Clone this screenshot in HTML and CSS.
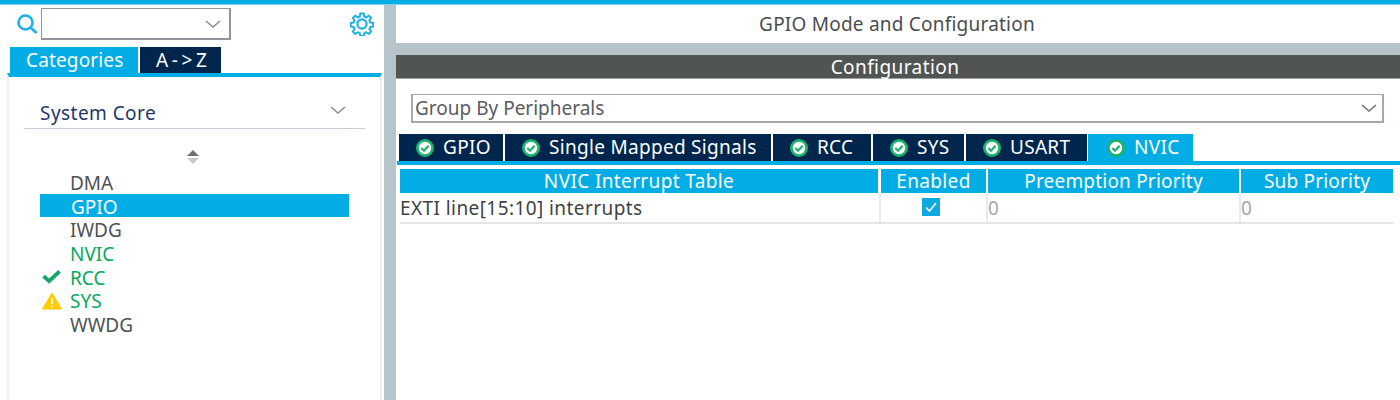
FILE: index.html
```html
<!DOCTYPE html>
<html lang="en">
<head>
<meta charset="utf-8">
<title>GPIO Mode and Configuration</title>
<link rel="stylesheet" href="styles.css">
</head>
<body>
<div class="topline"></div>
<div class="app">
  <aside class="left">
    <div class="search">
      <svg class="mag" viewBox="0 0 22 22" width="22" height="22"><circle cx="9.5" cy="9.5" r="7" fill="none" stroke="#1fb1e6" stroke-width="2.6"/><path d="M14.5 14.5L20.5 20" stroke="#1fb1e6" stroke-width="2.6" fill="none"/></svg>
      <div class="combo"><svg class="chev" viewBox="0 0 16 8" width="16" height="8"><path d="M1 1l7 6 7-6" fill="none" stroke="#8a8f92" stroke-width="1.6"/></svg></div>
      <svg class="gear" viewBox="0 0 24 24" width="24" height="24"><circle cx="12" cy="12" r="4.6" fill="none" stroke="#1fb1e6" stroke-width="2.2"/><path d="M10.3 1.5h3.4l.5 3 2.1.9 2.5-1.8 2.4 2.4-1.8 2.5.9 2.1 3 .5v3.4l-3 .5-.9 2.1 1.8 2.5-2.4 2.4-2.5-1.8-2.1.9-.5 3h-3.4l-.5-3-2.1-.9-2.5 1.8-2.4-2.4 1.8-2.5-.9-2.1-3-.5v-3.4l3-.5.9-2.1-1.8-2.5 2.4-2.4 2.5 1.8 2.1-.9z" fill="none" stroke="#1fb1e6" stroke-width="2" stroke-linejoin="round"/></svg>
    </div>
    <div class="lefttabs">
      <div class="ltab on">Categories</div>
      <div class="ltab az">A-&gt;Z</div>
    </div>
    <div class="tree">
      <div class="section"><span>System Core</span><svg viewBox="0 0 16 8" width="16" height="8"><path d="M1 1l7 6 7-6" fill="none" stroke="#8a8f92" stroke-width="1.6"/></svg></div>
      <div class="sorter"><i class="up"></i><i class="down"></i></div>
      <ul class="items">
        <li>DMA</li>
        <li class="sel">GPIO</li>
        <li>IWDG</li>
        <li class="ok">NVIC</li>
        <li class="ok"><svg class="mark" viewBox="0 0 20 16" width="19" height="15"><path d="M1.5 7.5l6 5.5L18.5 2.5" fill="none" stroke="#12a868" stroke-width="4"/></svg>RCC</li>
        <li class="ok"><svg class="mark" viewBox="0 0 20 18" width="20" height="18"><path d="M10 1L19.5 17H.5z" fill="#ffcc00" stroke="#ffcc00" stroke-linejoin="round"/><path d="M10 6v6M10 13.5v2" stroke="#fff" stroke-width="1.6"/></svg>SYS</li>
        <li>WWDG</li>
      </ul>
    </div>
  </aside>
  <div class="split"></div>
  <main class="right">
    <h1 class="title">GPIO Mode and Configuration</h1>
    <div class="gap"></div>
    <div class="confbar">Configuration</div>
    <div class="body">
      <div class="group">Group By Peripherals<svg viewBox="0 0 16 8" width="16" height="8"><path d="M1 1l7 6 7-6" fill="none" stroke="#6f7477" stroke-width="1.6"/></svg></div>
      <div class="tabs">
        <div class="tab t1"><svg class="tick" viewBox="0 0 18 18" width="18" height="18"><circle cx="9" cy="9" r="7.6" fill="#fff" stroke="#1bb36b" stroke-width="2.8"/><path d="M5.3 9l2.7 2.7 4.6-4.9" fill="none" stroke="#1bb36b" stroke-width="2.2"/></svg>GPIO</div>
        <div class="tab t2"><svg class="tick" viewBox="0 0 18 18" width="18" height="18"><circle cx="9" cy="9" r="7.6" fill="#fff" stroke="#1bb36b" stroke-width="2.8"/><path d="M5.3 9l2.7 2.7 4.6-4.9" fill="none" stroke="#1bb36b" stroke-width="2.2"/></svg>Single Mapped Signals</div>
        <div class="tab t3"><svg class="tick" viewBox="0 0 18 18" width="18" height="18"><circle cx="9" cy="9" r="7.6" fill="#fff" stroke="#1bb36b" stroke-width="2.8"/><path d="M5.3 9l2.7 2.7 4.6-4.9" fill="none" stroke="#1bb36b" stroke-width="2.2"/></svg>RCC</div>
        <div class="tab t4"><svg class="tick" viewBox="0 0 18 18" width="18" height="18"><circle cx="9" cy="9" r="7.6" fill="#fff" stroke="#1bb36b" stroke-width="2.8"/><path d="M5.3 9l2.7 2.7 4.6-4.9" fill="none" stroke="#1bb36b" stroke-width="2.2"/></svg>SYS</div>
        <div class="tab t5"><svg class="tick" viewBox="0 0 18 18" width="18" height="18"><circle cx="9" cy="9" r="7.6" fill="#fff" stroke="#1bb36b" stroke-width="2.8"/><path d="M5.3 9l2.7 2.7 4.6-4.9" fill="none" stroke="#1bb36b" stroke-width="2.2"/></svg>USART</div>
        <div class="tab t6 on"><svg class="tick" viewBox="0 0 18 18" width="18" height="18"><circle cx="9" cy="9" r="7.6" fill="#fff" stroke="#1bb36b" stroke-width="2.8"/><path d="M5.3 9l2.7 2.7 4.6-4.9" fill="none" stroke="#1bb36b" stroke-width="2.2"/></svg>NVIC</div>
      </div>
      <div class="tabline"></div>
      <div class="table">
        <div class="th">NVIC Interrupt Table</div>
        <div class="th">Enabled</div>
        <div class="th">Preemption Priority</div>
        <div class="th">Sub Priority</div>
        <div class="td name">EXTI line[15:10] interrupts</div>
        <div class="td check"><svg viewBox="0 0 18 18" width="18" height="18"><rect width="18" height="18" fill="#0fa9e2"/><path d="M4 9.5l3.5 3.5 6.5-8" fill="none" stroke="#fff" stroke-width="1.6"/></svg></div>
        <div class="td num">0</div>
        <div class="td num">0</div>
      </div>
    </div>
  </main>
</div>
</body>
</html>
```
FILE: styles.css
```css
* { box-sizing: border-box; }
html, body { margin: 0; height: 400px; overflow: hidden; background: #fff; }
body { font-family: "Noto Sans", "DejaVu Sans", sans-serif; font-size: 19px; color: #4f5254; }
.topline { height: 5px; background: #02ade5; border-bottom: 1px solid #7dd3ef; }
.app { display: flex; height: 395px; }
.left { width: 384px; padding: 0 2px 0 7px; background: #fff; display: flex; flex-direction: column; }
.search { height: 42px; display: flex; align-items: center; padding: 0 0 4px 9px; }
.mag { display: block; }
.combo { width: 190px; height: 32px; margin-left: 3px; border: 1px solid #8f9598; border-width: 1px 2px 2px 1px; display: flex; align-items: center; justify-content: flex-end; padding-right: 8px; }
.gear { margin-left: auto; margin-right: 8px; }
.lefttabs { display: flex; height: 26px; padding-left: 3px; }
.ltab { background: #00264d; color: #fff; line-height: 27px; letter-spacing: .15px; }
.ltab.on { background: #02ade5; padding: 0 15px 2px 16px; width: 128px; margin-right: 2px; }
.ltab.az { width: 81px; padding-left: 16px; letter-spacing: 3.6px; }
.tree { border-top: 4px solid #02ade5; flex: 1; border-left: 2px solid #eceff1; border-right: 2px solid #eceff1; padding: 0 0 0 15px; }
.section { height: 52px; margin-right: 15px; padding: 21px 19px 0 16px; border-bottom: 1px solid #c3ced6; display: flex; justify-content: space-between; color: #22386b; letter-spacing: .45px; line-height: 30px; }
.section svg { margin-top: 8px; }
.sorter { display: flex; flex-direction: column; align-items: center; gap: 2px; width: 338px; margin-top: 21px; height: 16px; }
.sorter .up { border: 6px solid transparent; border-top: 0; border-bottom: 6px solid #6d7072; }
.sorter .down { border: 6px solid transparent; border-bottom: 0; border-top: 6px solid #c6c8c9; }
.items { list-style: none; margin: 4px 0 0 16px; padding: 0; width: 309px; }
.items li { position: relative; height: 23.7px; line-height: 27px; padding-left: 30px; }
.items li.sel { background: #02ade5; color: #fff; padding-left: 31px; }
.items li.ok { color: #07a95e; }
.mark { position: absolute; left: 2px; top: 4px; }
.split { width: 12px; background: #b6c4cb; }
.right { flex: 1; display: flex; flex-direction: column; min-width: 0; }
.title { margin: 0; height: 38px; font-size: 19px; font-weight: 400; text-align: center; line-height: 38px; letter-spacing: .22px; color: #4a4d4f; padding-right: 2px; }
.gap { height: 12px; background: #b6c4cb; }
.confbar { height: 24px; background: #505453; border-bottom: 1px solid #9ba0a1; color: #fff; text-align: center; line-height: 24px; letter-spacing: .42px; padding-right: 6px; }
.body { flex: 1; padding: 15px 0 0; }
.group { height: 29px; margin: 0 16px 0 15px; border: 1px solid #a3a9ac; border-width: 1px 2px 2px 2px; display: flex; justify-content: space-between; align-items: center; padding: 0 5px 0 2px; color: #5a5d60; }
.tabs { display: flex; margin: 11px 0 0 3px; height: 27px; }
.tab { background: #00264d; color: #fff; height: 27px; line-height: 27px; display: flex; align-items: center; letter-spacing: .3px; margin-right: 2px; }
.tab .tick { margin-right: 9px; }
.tab.t1 { width: 104px; padding-left: 17px; }
.tab.t2 { width: 266px; padding-left: 17px; }
.tab.t3 { width: 98px; padding-left: 17px; }
.tab.t4 { width: 91px; padding-left: 17px; }
.tab.t5 { width: 121px; padding-left: 17px; margin-right: 1px; }
.tab.t6 { width: 105px; padding-left: 19px; }
.tab.on { background: #02ade5; }
.tabline { height: 4px; background: #02ade5; margin: 0 0 0 1px; }
.table { display: grid; grid-template-columns: 481px 107px 253px 1fr; margin: 4px 7px 0 4px; border-bottom: 2px solid #e2e6e9; }
.th { height: 24px; line-height: 24px; background: #02ade5; color: #fff; text-align: center; letter-spacing: .37px; border-right: 2px solid #fff; }
.th:nth-child(1) { border-right-width: 3px; }
.th:nth-child(3) { letter-spacing: .2px; }
.th:nth-child(4) { border-right: 0; letter-spacing: .2px; }
.td { height: 29px; line-height: 29px; border-right: 2px solid #e7eaec; padding-left: 0; letter-spacing: .42px; color: #3f4244; border-top: 1px solid #fff; }
.td:last-child { border-right: 0; }
.check { display: flex; justify-content: center; align-items: center; padding: 0 5px 2px 0; }
.num { color: #a1a7ab; }
```
